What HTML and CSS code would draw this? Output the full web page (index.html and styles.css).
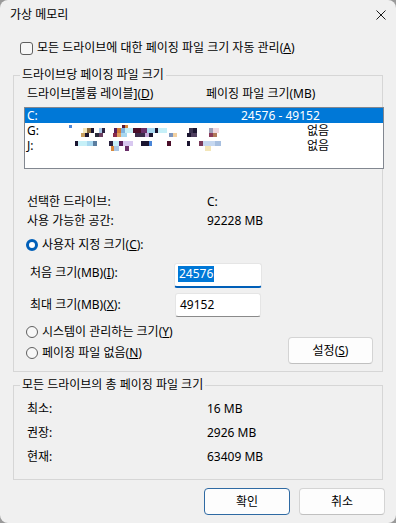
FILE: index.html
```html
<!DOCTYPE html>
<html lang="ko">
<head>
<meta charset="utf-8">
<title>가상 메모리</title>
<link rel="stylesheet" href="styles.css">
</head>
<body>
<div class="window">
  <div class="titlebar">
    <span class="title">가상 메모리</span>
    <svg class="close" width="10" height="10" viewBox="0 0 10 10"><path d="M0.5 0.5 L9.5 9.5 M9.5 0.5 L0.5 9.5" stroke="#1a1a1a" stroke-width="1" fill="none"/></svg>
  </div>

  <div class="auto-row">
    <span class="checkbox"></span>
    <span>모든 드라이브에 대한 페이징 파일 크기 자동 관리(<u>A</u>)</span>
  </div>

  <fieldset class="group group-drives">
    <legend>드라이브당 페이징 파일 크기</legend>
    <div class="list-header">
      <span class="col-drive">드라이브[볼륨 레이블](<u>D</u>)</span>
      <span>페이징 파일 크기(MB)</span>
    </div>
    <div class="drive-list">
      <div class="drive-row selected">
        <span class="drive-name">C:</span>
        <span class="drive-size">24576 - 49152</span>
      </div>
      <div class="drive-row">
        <span class="drive-name">G:<span class="redact redact-g"></span></span>
        <span class="drive-size none">없음</span>
      </div>
      <div class="drive-row">
        <span class="drive-name">J:<span class="redact redact-j"></span></span>
        <span class="drive-size none">없음</span>
      </div>
    </div>

    <div class="info">
      <div class="info-row"><span>선택한 드라이브:</span><span>C:</span></div>
      <div class="info-row"><span>사용 가능한 공간:</span><span>92228 MB</span></div>
    </div>

    <div class="radio-row custom">
      <span class="radio checked"></span>
      <span>사용자 지정 크기(<u>C</u>):</span>
    </div>

    <div class="size-row first">
      <span class="size-label">처음 크기(MB)(<u>I</u>):</span>
      <div class="textbox focused"><span class="sel">24576</span></div>
    </div>
    <div class="size-row second">
      <span class="size-label">최대 크기(MB)(<u>X</u>):</span>
      <div class="textbox">49152</div>
    </div>

    <div class="choice-area">
      <div class="choices">
        <div class="radio-row"><span class="radio"></span><span>시스템이 관리하는 크기(<u>Y</u>)</span></div>
        <div class="radio-row second-choice"><span class="radio"></span><span>페이징 파일 없음(<u>N</u>)</span></div>
      </div>
      <button class="btn btn-set">설정(<u>S</u>)</button>
    </div>
  </fieldset>

  <fieldset class="group group-total">
    <legend>모든 드라이브의 총 페이징 파일 크기</legend>
    <div class="total-row first"><span>최소:</span><span>16 MB</span></div>
    <div class="total-row"><span>권장:</span><span>2926 MB</span></div>
    <div class="total-row"><span>현재:</span><span>63409 MB</span></div>
  </fieldset>

  <div class="actions">
    <button class="btn btn-ok">확인</button>
    <button class="btn">취소</button>
  </div>
</div>
</body>
</html>
```

FILE: styles.css
```css
* { box-sizing: border-box; }

html, body {
  margin: 0;
  padding: 0;
  background: #9a9a9a;
}

body {
  font-family: "Noto Sans", "Noto Sans CJK KR", sans-serif;
  font-size: 12px;
  color: #000;
}

u { text-decoration: underline; text-underline-offset: 1px; }

.window {
  width: 396px;
  height: 523px;
  background: #f0f0f0;
  border-radius: 8px;
  overflow: hidden;
}

.titlebar {
  height: 30px;
  display: flex;
  align-items: center;
  justify-content: space-between;
  padding: 0 10px 0 10px;
}

.title {
  line-height: 16px;
}

.close { display: block; }

.auto-row {
  margin-top: 9px;
  height: 18px;
  display: flex;
  align-items: center;
  gap: 4px;
  padding-left: 20px;
  line-height: 18px;
}

.checkbox {
  width: 13px;
  height: 13px;
  border: 1px solid #5f5f5f;
  border-radius: 3px;
  background: #f7f7f7;
}

.group {
  margin: 0 0 0 13px;
  width: 370px;
  border: 1px solid #d6d6d6;
  padding: 0 0 0 10px;
  min-width: 0;
}

.group legend {
  margin-left: -4px;
  padding: 0 2px;
  line-height: 16px;
  height: 16px;
}

.group-drives {
  margin-top: 10px;
  padding-bottom: 7px;
}

.list-header {
  margin-top: 3px;
  height: 16px;
  line-height: 16px;
  padding-left: 3px;
  display: flex;
}

.col-drive { width: 179px; }

.drive-list {
  margin-top: 5px;
  width: 360px;
  height: 62px;
  border: 1px solid #828790;
  background: #fff;
}

.drive-row {
  height: 15px;
  line-height: 15px;
  display: flex;
  align-items: center;
  padding-left: 2px;
}

.drive-row.selected {
  background: #0078d7;
  color: #fff;
}

.drive-name {
  width: 214px;
  display: flex;
  align-items: center;
}

.drive-size.none { padding-left: 66px; }

.redact {
  display: inline-block;
  height: 12px;
}

.redact-g {
  margin-left: 30px;
  width: 205px;
  background:
    linear-gradient(90deg, #4a86d8 0 3px, transparent 3px 53px, #5a1d3a 53px 56px, #d98a3c 56px 59px, transparent 59px) 0 0 / 100% 3px no-repeat,
    linear-gradient(90deg, transparent 0 14px, #f3e6b8 14px 18px, #8a6a3b 18px 22px, #1b1530 22px 25px, transparent 25px 30px, #a9c6e4 30px 33px, #2b2340 33px 36px, transparent 36px 45px, #5a1d5a 45px 48px, #d27a35 48px 52px, #7fb2de 52px 56px, #c6f0f8 56px 64px, #4a0f2a 64px 72px, #6a2f6a 72px 78px, #a8d8f0 78px 86px, #1b1530 86px 89px, #c6f0f8 89px 98px, transparent 98px 120px, #3b3350 120px 124px, #1b1530 124px 128px, transparent 128px 140px, #a0a0b8 140px 144px, #f0d8e0 144px 150px, transparent 150px) 0 3px / 100% 5px no-repeat,
    linear-gradient(90deg, transparent 0 12px, #c8a060 12px 16px, #1b1530 16px 20px, transparent 20px 26px, #2a2a3a 26px 30px, #6a4060 30px 34px, transparent 34px 44px, #8a2a4a 44px 48px, #e0a060 48px 52px, #a8d8f0 52px 58px, transparent 58px 66px, #3a2a4a 66px 76px, #c6a8d8 76px 80px, #1b1530 80px 84px, transparent 84px 100px, #7d95bd 100px 104px, #f2d0a0 104px 108px, transparent 108px 118px, #1b1530 118px 122px, #504060 122px 128px, transparent 128px 140px, #8a3a5a 140px 144px, #b07a5a 144px 148px, transparent 148px) 0 8px / 100% 4px no-repeat;
}

.redact-j {
  margin-left: 41px;
  width: 165px;
  height: 10px;
  background:
    linear-gradient(90deg, #1b1530 0 3px, #c6f0f8 3px 12px, #a8d8f0 12px 18px, #5a7da0 18px 22px, transparent 22px 34px, #2b2340 34px 38px, #c6f0f8 38px 44px, #5a1d5a 44px 48px, #d8c8f0 48px 58px, transparent 58px 66px, #1b1530 66px 74px, #4a86d8 74px 77px, transparent 77px 92px, #4a0f2a 92px 96px, transparent 96px 112px, #1b1530 112px 115px, transparent 115px 124px, #7a3a5a 124px 128px, #c6d8f0 128px 140px, #a8c0e0 140px 146px, transparent 146px) 0 0 / 100% 5px no-repeat,
    linear-gradient(90deg, transparent 0 36px, #d98a3c 36px 39px, #a8c6e4 39px 44px, transparent 44px 50px, #6a2f6a 50px 54px, transparent 54px 130px, #f3e6b8 130px 136px, transparent 136px) 0 5px / 100% 5px no-repeat;
}

.info {
  margin-top: 23px;
}

.info-row, .total-row {
  display: grid;
  grid-template-columns: 180px 1fr;
  padding-left: 3px;
}

.info-row {
  height: 19px;
  line-height: 19px;
}

.radio-row {
  height: 18px;
  display: flex;
  align-items: center;
  gap: 4px;
  margin-left: 2px;
  line-height: 18px;
}

.radio-row.custom { margin-top: 6px; }

.radio {
  width: 12px;
  height: 12px;
  border-radius: 50%;
  border: 1px solid #5f5f5f;
  background: #f7f7f7;
  flex: none;
}

.radio.checked {
  border: 3.5px solid #005fb8;
  background: #fff;
}

.size-row {
  display: flex;
  align-items: flex-start;
}

.size-row.first { margin-top: 9px; }
.size-row.second { margin-top: 5px; }

.size-label {
  width: 150px;
  padding-left: 6px;
  line-height: 20px;
}

.size-row.second .size-label { padding-top: 2px; }

.textbox {
  width: 88px;
  height: 25px;
  background: #fff;
  border: 1px solid #e5e5e5;
  border-bottom: 1px solid #8a8a8a;
  border-radius: 3px;
  padding: 2px 0 0 4px;
  line-height: 18px;
}

.size-row.second .textbox {
  width: 86px;
  height: 24px;
  margin-left: 1px;
}

.textbox.focused {
  border-bottom: 2px solid #005fb8;
  padding: 1px 0 0 3px;
}

.sel {
  display: inline-block;
  background: #0078d7;
  color: #fff;
  line-height: 16px;
  padding: 0 1px;
}

.choice-area {
  margin-top: 6px;
  display: flex;
  justify-content: space-between;
  align-items: flex-start;
}

.radio-row.second-choice { margin-top: 3px; }

.btn {
  font-family: "Noto Sans", "Noto Sans CJK KR", sans-serif;
  font-size: 12px;
  color: #000;
  background: #fdfdfd;
  border: 1px solid #d4d4d4;
  border-bottom-color: #c0c0c0;
  border-radius: 4px;
  height: 27px;
  width: 86px;
  padding: 0;
  line-height: 16px;
}

.btn-set {
  margin-top: 14px;
  margin-right: 9px;
  width: 85px;
}

.group-total {
  margin-top: 5px;
  padding-bottom: 10px;
}

.total-row {
  height: 24px;
  line-height: 24px;
}

.total-row.first { margin-top: 4px; }

.actions {
  margin-top: 8px;
  display: flex;
  justify-content: flex-end;
  gap: 9px;
  padding-right: 11px;
}

.btn-ok {
  border: 1px solid #2f6aa3;
}
```
